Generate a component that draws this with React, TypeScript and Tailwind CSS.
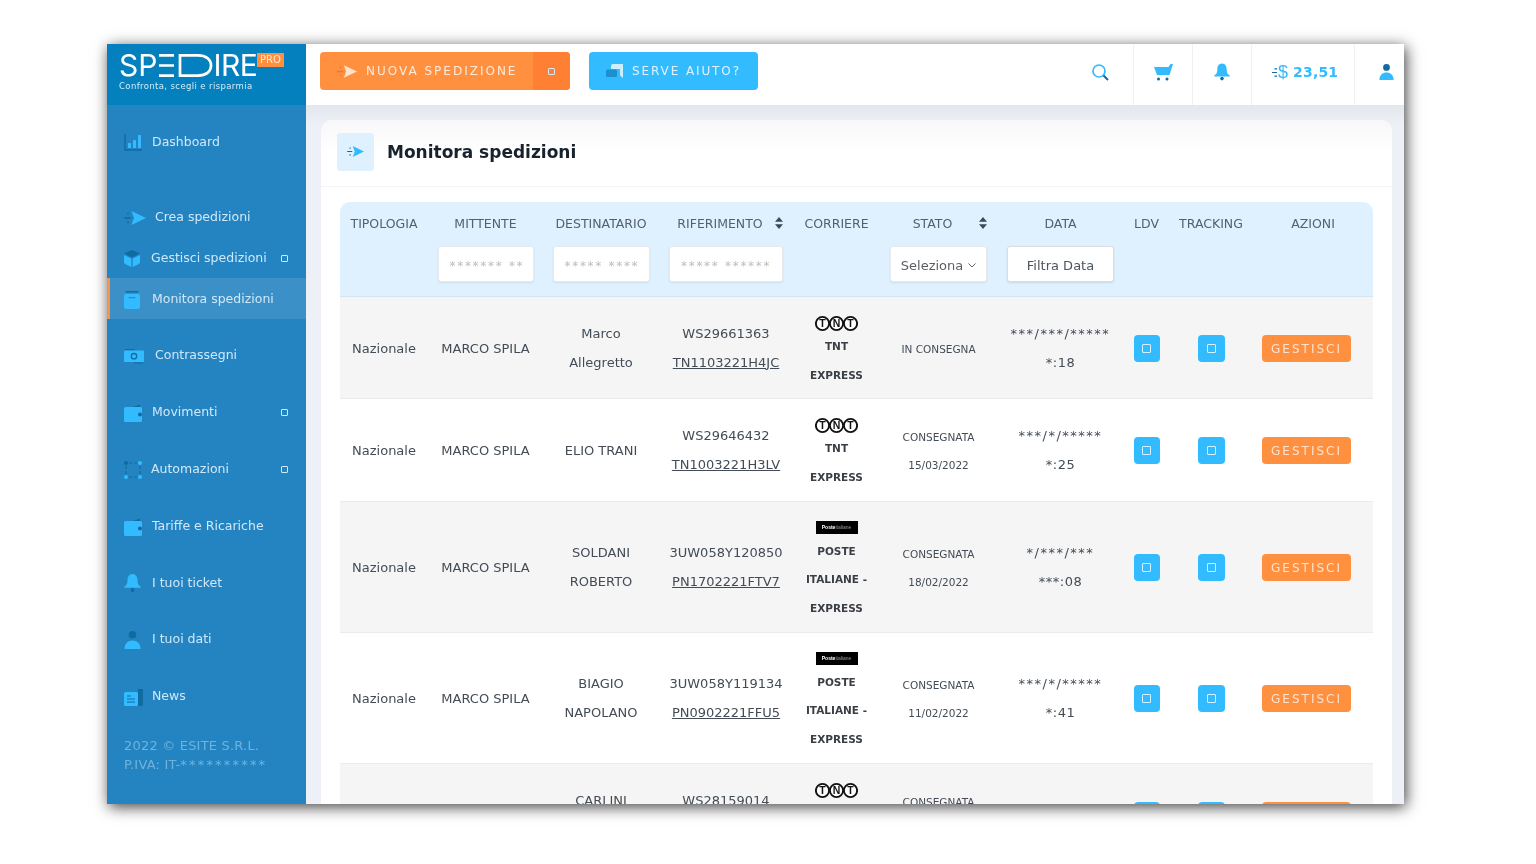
const LIGHT = "#33bbff";
const DARK = "#0f6ba0";

const SendIcon = ({ className, body = LIGHT, tail = DARK }: { className?: string; body?: string; tail?: string }) => (
  <svg viewBox="0 0 22 14" className={className}>
    <path d="M7.5 0 22 7 7.5 14 10 7z" fill={body} />
    <rect x="0" y="6.2" width="7" height="1.6" rx=".8" fill={tail} />
    <rect x="3" y="1.8" width="2" height="1.6" rx=".8" fill={tail} />
    <rect x="3" y="10.6" width="2" height="1.6" rx=".8" fill={tail} />
  </svg>
);

const BarsIcon = () => (
  <svg viewBox="0 0 18 17" className="w-[18px] h-[17px]">
    <path d="M1 0v16h17" fill="none" stroke={DARK} strokeWidth="1.4" />
    <rect x="4" y="9" width="3" height="5" rx=".6" fill={LIGHT} />
    <rect x="9" y="6" width="3" height="8" rx=".6" fill={LIGHT} />
    <rect x="14" y="1" width="3" height="13" rx=".6" fill={LIGHT} />
  </svg>
);

const BoxIcon = () => (
  <svg viewBox="0 0 16 17" className="w-[16px] h-[17px]">
    <path d="M8 0 16 3.6 8 7.4 0 3.6z" fill={DARK} />
    <path d="M0 5 7.3 8.6V17L1.2 14A2 2 0 0 1 0 12.2z" fill={LIGHT} />
    <path d="M16 5 8.7 8.6V17L14.8 14A2 2 0 0 0 16 12.2z" fill={LIGHT} />
  </svg>
);

const ArchiveIcon = () => (
  <svg viewBox="0 0 16 18" className="w-[16px] h-[18px]">
    <rect x="1.5" y="0" width="13" height="1.5" fill={DARK} />
    <rect x="0" y="3" width="16" height="15" rx="2" fill={LIGHT} />
    <rect x="4.5" y="6" width="7" height="1.3" rx=".6" fill={DARK} opacity=".55" />
  </svg>
);

const BillIcon = () => (
  <svg viewBox="0 0 20 16" className="w-[20px] h-[16px]">
    <path d="M1 1.5h10M10 15h9" stroke={DARK} strokeWidth="1" />
    <rect x="0" y="2.5" width="20" height="11.5" rx="1" fill={LIGHT} />
    <circle cx="10" cy="8.2" r="2.7" fill="none" stroke={DARK} strokeWidth="1.3" />
  </svg>
);

const WalletIcon = () => (
  <svg viewBox="0 0 18 18" className="w-[18px] h-[18px]">
    <path d="M9 3 16 .5V3z" fill={DARK} />
    <rect x="0" y="3" width="18" height="15" rx="1.5" fill={LIGHT} />
    <circle cx="16" cy="10.5" r="2" fill={DARK} />
  </svg>
);

const AutoIcon = () => (
  <svg viewBox="0 0 18 18" className="w-[18px] h-[18px]">
    <path d="M5 2h8M5 16h8M2 5v8M16 5v8" stroke={DARK} strokeWidth="1.2" strokeDasharray="3 2" />
    <circle cx="2" cy="2" r="2" fill={DARK} />
    <circle cx="16" cy="2" r="2" fill={LIGHT} />
    <circle cx="2" cy="16" r="2" fill={LIGHT} />
    <circle cx="16" cy="16" r="2" fill={LIGHT} />
  </svg>
);

const BellIcon = ({ className }: { className?: string }) => (
  <svg viewBox="0 0 17 18" className={className}>
    <path d="M8.5 0C5 0 3.5 3 3.5 6.5 3.5 10 2.5 11.2.5 12.4.1 12.7 0 13.8 1 13.8h15c1 0 .9-1.1.5-1.4C14.5 11.2 13.5 10 13.5 6.5 13.5 3 12 0 8.5 0z" fill={LIGHT} />
    <circle cx="8.5" cy="16" r="1.9" fill={DARK} />
  </svg>
);

const UserIcon = ({ className }: { className?: string }) => (
  <svg viewBox="0 0 16 18" className={className}>
    <circle cx="8" cy="3.8" r="3.8" fill={DARK} />
    <path d="M0 18C0 12.5 3.5 9.5 8 9.5S16 12.5 16 18z" fill={LIGHT} />
  </svg>
);

const NewsIcon = () => (
  <svg viewBox="0 0 19 18" className="w-[19px] h-[18px]">
    <path d="M6 1h13v15a2 2 0 0 1-2 2h-3V1z" fill={DARK} />
    <rect x="0" y="4" width="14" height="14" rx="1.5" fill={LIGHT} />
    <path d="M3 8h4M3 11h8M3 14h8" stroke={DARK} strokeWidth="1" />
  </svg>
);

const TinySquare = ({ className = "w-[7px] h-[7px] border-[#cfeafb]" }: { className?: string }) => (
  <span className={`block border-[1.5px] rounded-[1px] ${className}`} />
);

const SortCarets = () => (
  <svg viewBox="0 0 8 12" className="w-[8px] h-[12px] block">
    <path d="M4 0 8 4.8H0zM4 12 0 7.2H8z" fill="#3f4a55" />
  </svg>
);

const TntLogo = () => (
  <svg viewBox="0 0 43 17" className="w-[43px] h-[17px] block mx-auto">
    {[7.5, 21.5, 35.5].map((x, i) => (
      <g key={i}>
        <circle cx={x} cy="8.5" r="6.6" fill="#fff" stroke="#111" strokeWidth="1.9" />
        <text x={x} y="12.3" textAnchor="middle" fontSize="10.5" fontWeight="700" fill="#111" fontFamily="Liberation Sans, sans-serif">
          {i === 1 ? "N" : "T"}
        </text>
      </g>
    ))}
  </svg>
);

const PosteLogo = () => (
  <div className="w-[42px] h-[13px] mx-auto bg-black flex items-center justify-center text-[5px] leading-none font-bold text-white font-['Liberation_Sans',sans-serif]">
    Poste<span className="font-normal text-[#999]">italiane</span>
  </div>
);

const menu = [
  { label: "Dashboard", icon: <BarsIcon />, iconBox: "w-[28px]", row: "h-[57px] mt-[8px] mb-[26px]" },
  { label: "Crea spedizioni", icon: <SendIcon className="w-[22px] h-[14px]" />, iconBox: "w-[31px]", row: "h-[41px]" },
  { label: "Gestisci spedizioni", icon: <BoxIcon />, iconBox: "w-[27px]", row: "h-[41px]", more: true },
  { label: "Monitora spedizioni", icon: <ArchiveIcon />, iconBox: "w-[28px]", row: "h-[41px]", active: true },
  { label: "Contrassegni", icon: <BillIcon />, iconBox: "w-[31px]", row: "h-[57px] mt-[7px]" },
  { label: "Movimenti", icon: <WalletIcon />, iconBox: "w-[28px]", row: "h-[57px]", more: true },
  { label: "Automazioni", icon: <AutoIcon />, iconBox: "w-[27px]", row: "h-[57px]", more: true },
  { label: "Tariffe e Ricariche", icon: <WalletIcon />, iconBox: "w-[28px]", row: "h-[57px]" },
  { label: "I tuoi ticket", icon: <BellIcon className="w-[17px] h-[18px]" />, iconBox: "w-[28px]", row: "h-[56px]" },
  { label: "I tuoi dati", icon: <UserIcon className="w-[17px] h-[18px]" />, iconBox: "w-[28px]", row: "h-[57px]" },
  { label: "News", icon: <NewsIcon />, iconBox: "w-[28px]", row: "h-[57px]" },
];

const rows = [
  {
    h: "h-[102px]", gray: true, dest: ["Marco", "Allegretto"], ws: "WS29661363", tn: "TN1103221H4JC",
    logo: "tnt", carrier: ["TNT", "EXPRESS"], stato: ["IN CONSEGNA"], data: ["***/***/*****", "*:18"],
  },
  {
    h: "h-[102.5px]", gray: false, dest: ["ELIO TRANI"], ws: "WS29646432", tn: "TN1003221H3LV",
    logo: "tnt", carrier: ["TNT", "EXPRESS"], stato: ["CONSEGNATA", "15/03/2022"], data: ["***/*/*****", "*:25"],
  },
  {
    h: "h-[131px]", gray: true, dest: ["SOLDANI", "ROBERTO"], ws: "3UW058Y120850", tn: "PN1702221FTV7",
    logo: "poste", carrier: ["POSTE", "ITALIANE -", "EXPRESS"], stato: ["CONSEGNATA", "18/02/2022"], data: ["*/***/***", "***:08"],
  },
  {
    h: "h-[131.5px]", gray: false, dest: ["BIAGIO", "NAPOLANO"], ws: "3UW058Y119134", tn: "PN0902221FFU5",
    logo: "poste", carrier: ["POSTE", "ITALIANE -", "EXPRESS"], stato: ["CONSEGNATA", "11/02/2022"], data: ["***/*/*****", "*:41"],
  },
  {
    h: "h-[102px]", gray: true, dest: ["CARLINI", "GIUSEPPE"], ws: "WS28159014", tn: "TN2801221G7KP",
    logo: "tnt", carrier: ["TNT", "EXPRESS"], stato: ["CONSEGNATA", "28/01/2022"], data: ["*:12"],
  },
];

const Logo = () => (
  <div className="h-[61px] bg-[#0380bd] shrink-0 pl-[12px] pt-[6px] relative text-white">
    <div className="flex items-center h-[30px] text-[30px] leading-none font-normal font-['Inter',sans-serif]">
      <span>SP</span>
      <svg viewBox="0 0 54 23" className="w-[54px] h-[23px] ml-[2px]">
        <path d="M0 1.4h15M0 11.5h15M0 21.6h15" stroke="#fff" strokeWidth="2.7" />
        <path d="M21 1.4h18c8 0 13 4 13 10.1s-5 10.1-13 10.1H21z" fill="none" stroke="#fff" strokeWidth="2.7" />
      </svg>
      <span className="tracking-[-0.5px]">IRE</span>
    </div>
    <span className="absolute left-[150px] top-[9px] w-[27px] h-[14px] bg-[#ff9040] text-[10px] leading-[14px] text-center text-[#ffe6d2]">PRO</span>
    <div className="text-[8.5px] leading-[12px] tracking-[0.38px] text-[#d5ecf9]">Confronta, scegli e risparmia</div>
  </div>
);

const Sidebar = () => (
  <aside className="w-[199px] shrink-0 flex flex-col bg-[#2484c2]">
    <Logo />
    <nav className="flex flex-col">
      {menu.map((item) => (
        <div
          key={item.label}
          className={`flex items-center border-l-[3px] pl-[14px] pr-[18px] pt-[2px] text-[12.5px] text-[#cfe8f8] ${item.row} ${
            item.active ? "bg-[#3a90c7] border-[#ff9040]" : "border-transparent"
          }`}
        >
          <span className={`shrink-0 flex items-center ${item.iconBox}`}>{item.icon}</span>
          <span>{item.label}</span>
          {item.more && (
            <span className="ml-auto">
              <TinySquare />
            </span>
          )}
        </div>
      ))}
    </nav>
    <div className="pl-[17px] mt-[12px] text-[13px] leading-[19px] tracking-[0.2px] text-[#6fb3dc]">
      <div>2022 © ESITE S.R.L.</div>
      <div>
        P.IVA: IT-<span className="tracking-[2.2px]">**********</span>
      </div>
    </div>
  </aside>
);

const Topbar = () => (
  <header className="h-[61px] shrink-0 bg-white flex items-start pl-[14px]">
    <div className="flex h-[38px] w-[250px] mt-[8px] rounded-[4px] overflow-hidden bg-[#ff9040]">
      <div className="flex-1 flex items-center pl-[17px] text-[12px] tracking-[2px] text-[#ffe9d8]">
        <SendIcon className="w-[20px] h-[13px] mr-[9px]" body="#ffe2cc" tail="#e87a2c" />
        NUOVA SPEDIZIONE
      </div>
      <div className="w-[37px] bg-[#ff8033] flex items-center justify-center">
        <TinySquare />
      </div>
    </div>
    <div className="flex items-center h-[38px] w-[169px] mt-[8px] ml-[19px] rounded-[4px] bg-[#33bbff] pl-[17px] text-[12px] tracking-[1.9px] text-[#dff3ff]">
      <svg viewBox="0 0 17 14" className="w-[17px] h-[14px] mr-[9px]">
        <path d="M5 2a2 2 0 0 1 2-2h10v14l-3-2.5V5H5z" fill="#cdeeff" />
        <rect x="0" y="5.5" width="11" height="7.5" rx="1.5" fill="#1c8fd0" />
      </svg>
      SERVE AIUTO?
    </div>
    <div className="ml-auto flex h-full">
      <div className="w-[65px] pb-[5px] flex items-center justify-center">
        <svg viewBox="0 0 17 17" className="w-[17px] h-[17px]">
          <circle cx="7" cy="7" r="6" fill="none" stroke={LIGHT} strokeWidth="1.7" />
          <path d="M11.5 11.5 16 16" stroke={DARK} strokeWidth="1.9" />
        </svg>
      </div>
      <div className="w-[59px] pb-[5px] border-l border-[#eef0f5] flex items-center justify-center">
        <svg viewBox="0 0 19 17" className="w-[19px] h-[17px]">
          <path d="M0 3h14.5L16.5 0H19l-3.5 11H3z" fill={LIGHT} />
          <circle cx="4.5" cy="15" r="1.5" fill={DARK} />
          <circle cx="13" cy="15" r="1.5" fill={DARK} />
        </svg>
      </div>
      <div className="w-[59px] pb-[5px] border-l border-[#eef0f5] flex items-center justify-center">
        <BellIcon className="w-[16px] h-[18px]" />
      </div>
      <div className="w-[103px] pb-[5px] border-l border-[#eef0f5] flex items-center pl-[20px] text-[#33bbff]">
        <svg viewBox="0 0 5 9" className="w-[5px] h-[9px] mr-[1px]">
          <path d="M0 4.5h5M2.5 .8h2.5M2.5 8.2h2.5" stroke={DARK} strokeWidth="1.2" />
        </svg>
        <span className="text-[18px] leading-none font-['Liberation_Sans',sans-serif]">$</span>
        <span className="ml-[5px] text-[14px] font-bold tracking-[0.2px]">23,51</span>
      </div>
      <div className="w-[50px] pb-[5px] border-l border-[#eef0f5] flex items-center pl-[24px]">
        <UserIcon className="w-[15px] h-[16px]" />
      </div>
    </div>
  </header>
);

const FilterBox = ({ text, className }: { text: string; className: string }) => (
  <div className={`h-[36px] mx-auto pt-[3px] px-[11px] bg-white rounded-[3px] border border-[#e6e9ee] shadow-[0_1px_2px_rgba(0,0,0,0.08)] flex items-center overflow-hidden whitespace-nowrap text-[12px] tracking-[1.7px] text-[#bdbdbd] ${className}`}>
    {text}
  </div>
);

const heads = ["TIPOLOGIA", "MITTENTE", "DESTINATARIO", "RIFERIMENTO", "CORRIERE", "STATO", "DATA", "LDV", "TRACKING", "AZIONI"];

const colWidths = ["w-[88px]", "w-[115px]", "w-[116px]", "w-[134px]", "w-[87px]", "w-[117px]", "w-[127px]", "w-[45px]", "w-[84px]", "w-[120px]"];

const Table = () => (
  <table className="table-fixed w-[1033px] border-separate border-spacing-0 text-center text-[13px] text-[#434c56]">
    <colgroup>
      {colWidths.map((w) => (
        <col key={w} className={w} />
      ))}
    </colgroup>
    <thead className="text-[12.5px] text-[#55606b]">
      <tr>
        {heads.map((h, i) => (
          <th
            key={h}
            className={`relative h-[95px] p-0 align-top bg-[#dff1ff] border-b border-[#d6e4ee] font-normal ${
              i === 0 ? "rounded-tl-[10px]" : i === 9 ? "rounded-tr-[10px]" : ""
            }`}
          >
            <div className={`h-[44px] leading-[44px] whitespace-nowrap ${h === "RIFERIMENTO" || h === "STATO" ? "pr-[12px]" : ""}`}>{h}</div>
            {(h === "RIFERIMENTO" || h === "STATO") && (
              <span className="absolute top-[15px] right-[10px]">
                <SortCarets />
              </span>
            )}
            {h === "MITTENTE" && <FilterBox text="******* **" className="w-[96px]" />}
            {h === "DESTINATARIO" && <FilterBox text="***** ****" className="w-[97px]" />}
            {h === "RIFERIMENTO" && <FilterBox text="***** ******" className="w-[114px]" />}
            {h === "STATO" && (
              <div className="h-[36px] w-[97px] mx-auto pt-[3px] bg-white rounded-[3px] border border-[#e6e9ee] shadow-[0_1px_2px_rgba(0,0,0,0.08)] flex items-center justify-center gap-[5px] text-[13px] text-[#5a5f66]">
                Seleziona
                <svg viewBox="0 0 8 5" className="w-[8px] h-[5px]">
                  <path d="M.5.5 4 4 7.5.5" fill="none" stroke="#5a5f66" />
                </svg>
              </div>
            )}
            {h === "DATA" && (
              <div className="h-[36px] w-[107px] mx-auto pt-[3px] bg-white rounded-[3px] border border-[#d9dde3] shadow-[0_1px_2px_rgba(0,0,0,0.1)] flex items-center justify-center text-[13px] text-[#4b5560]">
                Filtra Data
              </div>
            )}
          </th>
        ))}
      </tr>
    </thead>
    <tbody>
      {rows.map((r) => {
        const bg = r.gray ? "bg-[#f5f5f5]" : "bg-white";
        const cell = `p-0 pt-[2px] border-b border-[#e9ebee] ${bg}`;
        return (
          <tr key={r.ws} className={r.h}>
            <td className={cell}>Nazionale</td>
            <td className={cell}>MARCO SPILA</td>
            <td className={`${cell} leading-[28.5px]`}>
              {r.dest.map((d) => (
                <div key={d}>{d}</div>
              ))}
            </td>
            <td className={`${cell} leading-[28.5px]`}>
              <div>{r.ws}</div>
              <div className="underline">{r.tn}</div>
            </td>
            <td className={`p-0 border-b border-[#e9ebee] align-top ${bg} ${r.logo === "tnt" ? "pt-[18px]" : "pt-[19px]"}`}>
              {r.logo === "tnt" ? <TntLogo /> : <PosteLogo />}
              <div className={`text-[10.5px] leading-[28.5px] font-bold text-[#3a3f45] ${r.logo === "tnt" ? "mt-0" : "mt-[3px]"}`}>
                {r.carrier.map((c) => (
                  <div key={c}>{c}</div>
                ))}
              </div>
            </td>
            <td className={`p-0 pt-[3px] border-b border-[#e9ebee] text-[10.5px] leading-[28.5px] ${bg}`}>
              {r.stato.map((s) => (
                <div key={s}>{s}</div>
              ))}
            </td>
            <td className={`${cell} leading-[28.5px]`}>
              {r.data.map((d, i) => (
                <div key={d} className={i === 0 ? "tracking-[1.5px]" : "tracking-[0.5px]"}>{d}</div>
              ))}
            </td>
            <td className={cell}>
              <span className="mx-auto w-[26px] h-[27px] rounded-[4px] bg-[#33bbff] flex items-center justify-center">
                <TinySquare className="w-[9px] h-[9px] border-[#d8f1ff]" />
              </span>
            </td>
            <td className={cell}>
              <span className="mx-auto w-[27px] h-[27px] rounded-[4px] bg-[#33bbff] flex items-center justify-center">
                <TinySquare className="w-[9px] h-[9px] border-[#d8f1ff]" />
              </span>
            </td>
            <td className={cell}>
              <span className="ml-[9px] w-[89px] h-[27px] rounded-[4px] bg-[#ff9040] flex items-center justify-center text-[12px] tracking-[2px] text-[#ffe3cd]">
                GESTISCI
              </span>
            </td>
          </tr>
        );
      })}
    </tbody>
  </table>
);

export default function App() {
  return (
    <div className="h-screen bg-white overflow-hidden pt-[44px] pl-[107px] font-['DejaVu_Sans',sans-serif]">
      <div className="flex w-[1297px] h-[760px] overflow-hidden blur-[0.4px] shadow-[2px_3px_14px_rgba(0,0,0,0.75)]">
        <Sidebar />
        <div className="flex-1 min-w-0 flex flex-col bg-[#eef0f7]">
          <Topbar />
          <main className="flex-1 min-h-0 overflow-hidden pl-[15px] pr-[12px] pt-[15px] bg-gradient-to-b from-[#e4e6ed] to-[#eef0f7] to-[20px]">
            <div className="bg-white rounded-t-[12px] h-full overflow-hidden">
              <div className="h-[67px] flex items-center pl-[16px] pb-[3px] border-b border-[#f3f4f6] bg-gradient-to-b from-[#f8f8fa] to-white to-[35px]">
                <div className="w-[37px] h-[38px] rounded-[3px] bg-[#dff1ff] flex items-center justify-center">
                  <SendIcon className="w-[17px] h-[11px]" />
                </div>
                <h1 className="ml-[13px] mt-[3px] text-[17px] font-bold text-[#18222d]">Monitora spedizioni</h1>
              </div>
              <div className="pt-[15px] pl-[19px]">
                <Table />
              </div>
            </div>
          </main>
        </div>
      </div>
    </div>
  );
}
